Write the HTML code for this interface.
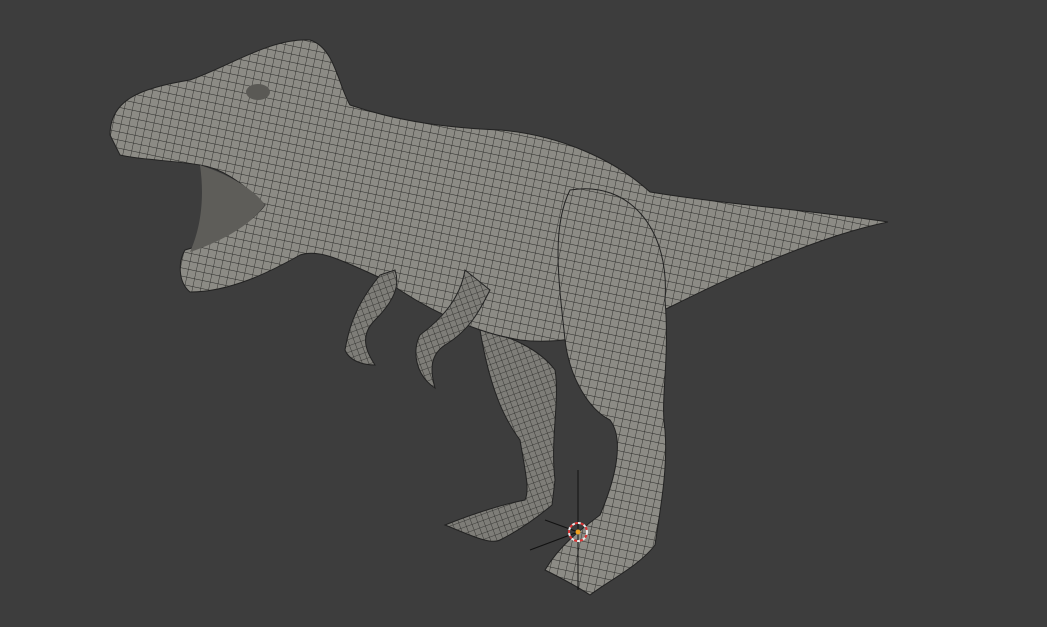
<!DOCTYPE html>
<html><head><style>
html,body{margin:0;padding:0;background:#3d3d3d;width:1047px;height:627px;overflow:hidden}
svg{display:block}
</style></head><body>
<svg width="1047" height="627" viewBox="0 0 1047 627">
<defs>
<pattern id="m" width="8" height="8" patternUnits="userSpaceOnUse" patternTransform="rotate(12)">
<rect width="8" height="8" fill="#8c8b85"/>
<path d="M0 0H8M0 0V8" stroke="#2a2a28" stroke-width="0.9"/>
</pattern>
<pattern id="m2" width="6" height="6" patternUnits="userSpaceOnUse" patternTransform="rotate(-20)">
<rect width="6" height="6" fill="#7e7d78"/>
<path d="M0 0H6M0 0V6" stroke="#262624" stroke-width="0.8"/>
</pattern>
</defs>
<rect width="1047" height="627" fill="#3d3d3d"/>
<path d="M480,330 C490,390 505,420 520,440 C525,470 530,490 525,500 C500,505 470,515 445,525 C470,535 490,545 500,540 C520,530 540,515 552,505 L555,480 C550,440 560,400 555,370 C540,350 510,335 480,330 Z" fill="url(#m2)" stroke="#222" stroke-width="1"/>
<path d="M110,135 C110,100 140,88 190,80 C230,66 270,38 310,40 C335,48 338,85 350,105 C400,122 450,128 500,130 C560,135 615,160 650,192 C730,205 810,210 888,222 C820,236 740,272 668,308 L640,320 C600,335 560,345 520,340 C470,332 420,305 385,280 C345,262 320,248 300,255 C270,272 230,292 190,292 C178,282 178,262 185,250 C220,240 250,225 265,205 C240,180 220,168 200,165 C170,160 140,160 120,155 Z" fill="url(#m)" stroke="#222" stroke-width="1"/>
<path d="M200,165 C230,175 255,190 265,205 C250,225 225,240 190,252 C200,230 205,200 200,165 Z" fill="#5e5d59"/>
<ellipse cx="258" cy="92" rx="12" ry="8" fill="#5a5955"/>
<path d="M380,275 C360,300 350,320 345,350 C350,362 365,365 375,365 C365,350 360,335 375,320 C395,300 400,285 395,270 Z" fill="url(#m2)" stroke="#222"/>
<path d="M465,270 C460,300 440,320 420,335 C412,350 415,375 435,388 C430,370 430,355 445,345 C470,330 480,310 490,290 Z" fill="url(#m2)" stroke="#222"/>
<path d="M570,190 C630,180 670,230 665,300 C670,360 660,400 665,430 C668,470 660,510 655,545 C640,565 610,580 590,595 C575,585 555,575 545,570 C560,545 580,530 600,515 C615,480 625,440 610,420 C590,410 570,380 565,340 C560,290 550,230 570,190 Z" fill="url(#m)" stroke="#222" stroke-width="1"/>
<g stroke="#111" stroke-width="1">
<line x1="578" y1="470" x2="578" y2="532"/><line x1="530" y1="550" x2="578" y2="532"/><line x1="545" y1="520" x2="578" y2="532"/><line x1="578" y1="532" x2="578" y2="590"/>
</g>
<circle cx="578" cy="532" r="9" fill="none" stroke="#e8e8e8" stroke-width="2" stroke-dasharray="3 3"/>
<circle cx="578" cy="532" r="9" fill="none" stroke="#d33" stroke-width="2" stroke-dasharray="3 3" stroke-dashoffset="3"/>
<circle cx="578" cy="532" r="2.5" fill="#f0a020"/>
</svg>
</body></html>
